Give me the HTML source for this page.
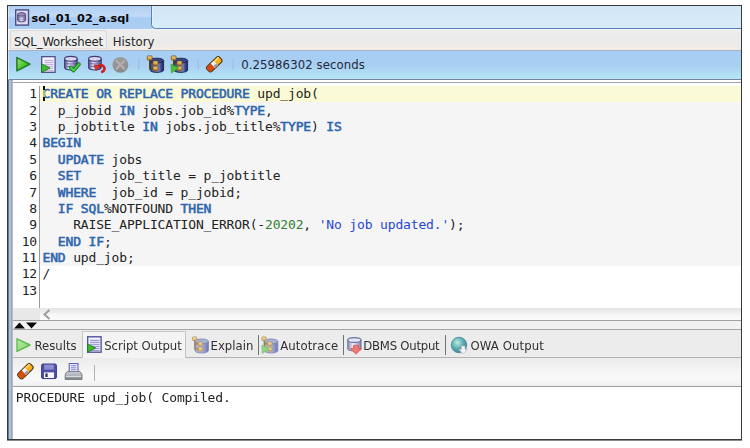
<!DOCTYPE html>
<html>
<head>
<meta charset="utf-8">
<title>SQL Worksheet</title>
<style>
html,body{margin:0;padding:0;background:#fff;}
body{width:750px;height:448px;overflow:hidden;position:relative;font-family:"DejaVu Sans","Liberation Sans",sans-serif;font-size:11.7px;color:#1a1a1a;}
.abs{position:absolute;}
#win{filter:blur(0.35px);position:absolute;left:7px;top:5px;width:733px;height:433px;border:1px solid #3a3a3a;box-shadow:0 1px 0 #8c8c8c;background:#fff;overflow:hidden;}
/* coordinates inside #win are offset by (8,6) */
#tabbar{left:0;top:0;width:733px;height:23px;background:linear-gradient(#d0e5f6,#d9edf8);}
#tabbar-line{left:143px;top:-3px;width:600px;height:25.7px;box-sizing:border-box;border:1.6px solid #5580b8;border-radius:0 0 0 4.5px;background:linear-gradient(#d2e6f6 12%,#d8ecf8 100%);box-shadow:inset 1px 0 0 #e6f2fb;}
#filetab{left:0;top:0;width:144px;height:23.4px;background:linear-gradient(#a4c8f0 0%,#b4d2f3 8%,#c2dbf6 44%,#a8ccf3 52%,#aacdf3 100%);border-top-right-radius:3px;box-sizing:border-box;}
#filetab .txt{left:23.6px;top:5.7px;font-weight:bold;font-size:11.3px;letter-spacing:0.02px;color:#0a0a0a;white-space:nowrap;}
#subtabs{left:0;top:24px;width:733px;height:20px;background:linear-gradient(#efeded,#ebebeb 55%,#f2ebe6);}
#ws-tab{left:1.5px;top:0px;width:97.5px;height:19.4px;background:#eeeeee;border:1px solid #d8d8d8;border-bottom-color:#e2e0de;border-radius:3px 3px 1px 1px;box-sizing:border-box;}
.t{position:absolute;white-space:nowrap;color:#262626;}
#toolbar{left:0;top:44px;width:733px;height:30px;background:linear-gradient(#a6cdf4 0%,#a9cff2 50%,#b6e6f4 100%);border-top:1px solid #a9b3c2;border-bottom:1px solid #7686a2;box-sizing:border-box;}
#tb-gap{left:0;top:74px;width:733px;height:6px;background:#fff;}
#tb-gap2{left:0;top:75.7px;width:733px;height:2px;background:linear-gradient(#9a9fa3,#b4b8bb);}
#leftedge{left:0;top:74px;width:5px;height:359px;background:linear-gradient(90deg,#66799a 0,#66799a 0.6px,#a8c3e6 0.9px,#a8c3e6 2.6px,#9da1a8 3px,#a6a8ac 4.2px,#d8d8d8 5px);}
#editor{left:4px;top:77px;width:729px;height:225px;background:#fff;font-family:"DejaVu Sans Mono","Liberation Mono",monospace;font-size:13px;}
.ln{position:absolute;left:28px;width:701px;height:16.4px;}
.ln .n{position:absolute;left:-28px;top:0.7px;width:25px;text-align:right;color:#222;line-height:16.33px;letter-spacing:-0.15px;}
.ln .c{position:absolute;left:2.5px;top:0.7px;white-space:pre;line-height:16.33px;letter-spacing:-0.155px;color:#222;}
.k{color:#2c64ae;-webkit-text-stroke:0.55px #2c64ae;}
.s{color:#2846d8;}
.num{color:#2f7f2f;}
#gutterline{left:27px;top:3px;width:1px;height:222px;background:#9a9a9a;}
#hscroll{left:4px;top:301.5px;width:729px;height:12.5px;background:linear-gradient(#e4e4e4 0,#ededed 30%,#f7f7f7 60%,#fbfbfb 100%);}
#hscroll .corner{left:0;top:0;width:28px;height:12.5px;background:#e8e8e8;}
#split1{left:0;top:313.8px;width:733px;height:1.6px;background:#a0a0a0;}
#splitter{left:0;top:315px;width:733px;height:8px;background:#f2f2f2;}
#split2{left:0;top:322.6px;width:733px;height:1.6px;background:#a6a6a6;}
#btabs .t{color:#303030;}
#btabs{left:4px;top:324px;width:729px;height:27.7px;background:#ececec;border-bottom:1px solid #b4b4b4;box-sizing:border-box;}
#so-tab{left:70px;top:1px;width:104px;height:28px;background:#f4f4f4;border:1px solid #c4c4c4;border-bottom:none;box-sizing:border-box;}
#btool{left:4px;top:352px;width:729px;height:29.4px;background:linear-gradient(#ececec 0,#f1f1f1 30%,#f8f8f8 62%,#f7f7f7 80%,#f0f0f0 100%);border-bottom:1.6px solid #9e9e9e;box-sizing:border-box;}
#out{left:4px;top:381.4px;width:729px;height:51.6px;background:#fff;font-family:"DejaVu Sans Mono","Liberation Mono",monospace;font-size:13px;}
.sep{position:absolute;width:1px;background:#8a8a8a;}
</style>
</head>
<body>
<div id="win">
  <div id="tabbar" class="abs"></div>
  
  <div class="abs" style="left:0;top:23px;width:733px;height:1px;background:#f1f3f6"></div>
  <div id="filetab" class="abs">
    <svg class="abs" style="left:7px;top:3px" width="15" height="18" viewBox="15 9 15 18">
      <defs><linearGradient id="gTabCyl" x1="0" y1="0" x2="1" y2="0"><stop offset="0" stop-color="#544c7c"/><stop offset="0.3" stop-color="#c8bee4"/><stop offset="0.5" stop-color="#ece6fa"/><stop offset="0.75" stop-color="#a89cd0"/><stop offset="1" stop-color="#544c7c"/></linearGradient></defs>
      <rect x="15.7" y="9.9" width="12.8" height="15.2" fill="#e0daf2" stroke="#484e88" stroke-width="1.4"/>
      <path d="M17.6 14.4 V20 A4 1.9 0 0 0 25.6 20 V14.4 Z" fill="url(#gTabCyl)" stroke="#4c4474" stroke-width="0.9"/>
      <ellipse cx="21.6" cy="14.4" rx="4" ry="1.8" fill="#9a8ebc" stroke="#4c4474" stroke-width="0.9"/>
      <path d="M18.2 16.8 A3.6 1.5 0 0 0 25 16.8 M18.2 18.8 A3.6 1.5 0 0 0 25 18.8" fill="none" stroke="#8278ac" stroke-width="0.6"/>
    </svg>
    <span class="t txt">sol_01_02_a.sql</span>
  </div>
  <div id="tabbar-line" class="abs"></div>
  <div id="subtabs" class="abs">
    <div id="ws-tab" class="abs"></div>
    <span class="t" style="left:6.1px;top:5px;letter-spacing:-0.17px">SQL_Worksheet</span>
    <span class="t" style="left:104.8px;top:5px;letter-spacing:0px">History</span>
  </div>
  <div id="toolbar" class="abs">
    <span class="t" style="left:233.2px;top:7px;letter-spacing:0.09px;color:#1e2a3c">0.25986302 seconds</span>
  </div>

  <svg class="abs" style="left:2px;top:46px" width="240" height="30" viewBox="10 52 240 30">
    <defs>
      <linearGradient id="gPlay" x1="0" y1="0" x2="1" y2="1"><stop offset="0" stop-color="#9be868"/><stop offset="0.6" stop-color="#46c032"/><stop offset="1" stop-color="#2aa31e"/></linearGradient>
      <linearGradient id="gCyl" x1="0" y1="0" x2="1" y2="0"><stop offset="0" stop-color="#4a4a88"/><stop offset="0.35" stop-color="#e4def2"/><stop offset="0.6" stop-color="#b9aed8"/><stop offset="1" stop-color="#3c3c74"/></linearGradient>
      <linearGradient id="gNavy" x1="0" y1="0" x2="1" y2="0"><stop offset="0" stop-color="#3a4678"/><stop offset="0.4" stop-color="#6a74ac"/><stop offset="0.65" stop-color="#7c80c4"/><stop offset="0.85" stop-color="#34427e"/><stop offset="1" stop-color="#1c2850"/></linearGradient>
      <linearGradient id="gNode" x1="0" y1="0" x2="0" y2="1"><stop offset="0" stop-color="#f0d68a"/><stop offset="1" stop-color="#c9872a"/></linearGradient>
      <linearGradient id="gGray" x1="0" y1="0" x2="0" y2="1"><stop offset="0" stop-color="#9c9c9c"/><stop offset="1" stop-color="#8a8a8a"/></linearGradient>
    </defs>
    <!-- run -->
    <path d="M16.9 57.6 L30 64.2 L16.9 70.9 Z" fill="url(#gPlay)" stroke="#1f7a1f" stroke-width="1.5" stroke-linejoin="round"/>
    <!-- run script -->
    <rect x="41.7" y="56.7" width="13.4" height="15.6" fill="#fbf8ff" stroke="#4a4e8a" stroke-width="1.3"/>
    <path d="M44.5 60.3H53.5M44.5 62.3H53.5M44.5 64.3H53.5M44.5 66.3H53.5M44.5 68.3H53.5M44.5 70.3H53.5" stroke="#b79cd4" stroke-width="1"/>
    <path d="M41.6 63.8 L50 68 L41.6 72.3 Z" fill="#43bb30" stroke="#1f7a1f" stroke-width="0.9" stroke-linejoin="round"/>
    <!-- commit -->
    <path d="M64.6 58.8 V67.6 A6.3 2.4 0 0 0 77.2 67.6 V58.8 Z" fill="url(#gCyl)" stroke="#3d3f78" stroke-width="1.1"/>
    <path d="M65 62.2 A6 2.2 0 0 0 76.8 62.2 M65 65 A6 2.2 0 0 0 76.8 65" fill="none" stroke="#6a66a0" stroke-width="0.8"/>
    <ellipse cx="70.9" cy="58.8" rx="6.3" ry="2.4" fill="#dcd6ee" stroke="#3d3f78" stroke-width="1.1"/>
    <path d="M70.6 67.4 L73.4 70.6 L79 64.2" fill="none" stroke="#17801b" stroke-width="3.6" stroke-linecap="round" stroke-linejoin="round"/>
    <path d="M70.6 67.4 L73.4 70.6 L79 64.2" fill="none" stroke="#4ed447" stroke-width="1.7" stroke-linecap="round" stroke-linejoin="round"/>
    <!-- rollback -->
    <path d="M88.6 58.8 V67.6 A6.3 2.4 0 0 0 101.2 67.6 V58.8 Z" fill="url(#gCyl)" stroke="#3d3f78" stroke-width="1.1"/>
    <path d="M89 62.2 A6 2.2 0 0 0 100.8 62.2 M89 65 A6 2.2 0 0 0 100.8 65" fill="none" stroke="#6a66a0" stroke-width="0.8"/>
    <ellipse cx="94.9" cy="58.8" rx="6.3" ry="2.4" fill="#dcd6ee" stroke="#3d3f78" stroke-width="1.1"/>
    <path d="M98 67.2 A3.4 3.4 0 1 1 102.2 71.8" fill="none" stroke="#d21e1e" stroke-width="2.6" stroke-linecap="round"/>
    <path d="M94.2 65.2 L99.6 65.6 L96.2 70.6 Z" fill="#e23a22" stroke="#c01818" stroke-width="0.8" stroke-linejoin="round"/>
    <!-- cancel -->
    <circle cx="120.4" cy="64.8" r="7.9" fill="url(#gGray)"/>
    <path d="M116.6 61 L124.2 68.6 M124.2 61 L116.6 68.6" stroke="#b4aeae" stroke-width="2.2" stroke-linecap="round"/>
    <!-- separators -->
    <rect x="138.3" y="59" width="1" height="11" fill="#9fb9d6"/>
    <rect x="197.6" y="59" width="1" height="11" fill="#9fb9d6"/>
    <rect x="232.6" y="59" width="1" height="11" fill="#9fb9d6"/>
    <!-- explain -->
    <path d="M150 60.6 V70 A6.8 2.4 0 0 0 163.6 70 V60.6 Z" fill="url(#gNavy)" stroke="#22305c" stroke-width="1"/>
    <ellipse cx="156.8" cy="60.6" rx="6.8" ry="2.4" fill="#34448a" stroke="#1c2850" stroke-width="1"/>
    <path d="M149.6 58 V68.2 H154 M149.6 63 H154" fill="none" stroke="#5a3c14" stroke-width="1.1"/>
    <rect x="147.2" y="55.9" width="5" height="4.2" rx="1" fill="url(#gNode)" stroke="#7a5418" stroke-width="0.8"/>
    <rect x="153" y="61" width="5" height="4.2" rx="1" fill="url(#gNode)" stroke="#7a5418" stroke-width="0.8"/>
    <rect x="153" y="66.2" width="5" height="4.2" rx="1" fill="url(#gNode)" stroke="#7a5418" stroke-width="0.8"/>
    <!-- autotrace -->
    <path d="M174 60.6 V70 A6.8 2.4 0 0 0 187.6 70 V60.6 Z" fill="url(#gNavy)" stroke="#22305c" stroke-width="1"/>
    <ellipse cx="180.8" cy="60.6" rx="6.8" ry="2.4" fill="#34448a" stroke="#1c2850" stroke-width="1"/>
    <path d="M173.6 58 V68.2 H178 M173.6 63 H178" fill="none" stroke="#5a3c14" stroke-width="1.1"/>
    <rect x="171.2" y="55.9" width="5" height="4.2" rx="1" fill="url(#gNode)" stroke="#7a5418" stroke-width="0.8"/>
    <rect x="177" y="61" width="5" height="4.2" rx="1" fill="url(#gNode)" stroke="#7a5418" stroke-width="0.8"/>
    <rect x="177" y="66.2" width="5" height="4.2" rx="1" fill="url(#gNode)" stroke="#7a5418" stroke-width="0.8"/>
    <path d="M171 64 L178.6 68 L171.4 73 Z" fill="#4cc03a" stroke="#2a9a24" stroke-width="0.6" stroke-linejoin="round"/>
    <!-- eraser -->
    <g transform="rotate(-44 214.3 64.3)">
      <rect x="205.6" y="60.8" width="17.4" height="7" rx="2.4" fill="#f6ae1c" stroke="#4a2a0c" stroke-width="1"/>
      <rect x="206.1" y="61.3" width="6.8" height="6" rx="2" fill="#d8460c"/>
      <rect x="212.2" y="61.3" width="4.2" height="6" fill="#f4f2f0"/>
      <rect x="212.2" y="64.9" width="4.2" height="2.4" fill="#9a9ea8"/>
      <rect x="216.6" y="61.4" width="5.6" height="1.8" fill="#fcd460"/>
    </g>
  </svg>
  <div id="tb-gap" class="abs"></div>
  <div id="tb-gap2" class="abs"></div>
  <div id="editor" class="abs">
    <div class="ln" style="top:2.70px;background:#fbfad7"><span class="n">1</span><span class="c"><span class="k">CREATE OR REPLACE PROCEDURE</span> upd_job(</span></div>
    <div class="ln" style="top:19.07px;background:#f5f5f5"><span class="n">2</span><span class="c">  p_jobid <span class="k">IN</span> jobs.job_id%<span class="k">TYPE</span>,</span></div>
    <div class="ln" style="top:35.44px;background:#f5f5f5"><span class="n">3</span><span class="c">  p_jobtitle <span class="k">IN</span> jobs.job_title%<span class="k">TYPE</span>) <span class="k">IS</span></span></div>
    <div class="ln" style="top:51.81px;background:#f5f5f5"><span class="n">4</span><span class="c"><span class="k">BEGIN</span></span></div>
    <div class="ln" style="top:68.18px;background:#f5f5f5"><span class="n">5</span><span class="c">  <span class="k">UPDATE</span> jobs</span></div>
    <div class="ln" style="top:84.55px;background:#f5f5f5"><span class="n">6</span><span class="c">  <span class="k">SET</span>    job_title = p_jobtitle</span></div>
    <div class="ln" style="top:100.92px;background:#f5f5f5"><span class="n">7</span><span class="c">  <span class="k">WHERE</span>  job_id = p_jobid;</span></div>
    <div class="ln" style="top:117.29px;background:#f5f5f5"><span class="n">8</span><span class="c">  <span class="k">IF SQL</span>%NOTFOUND <span class="k">THEN</span></span></div>
    <div class="ln" style="top:133.66px;background:#f5f5f5"><span class="n">9</span><span class="c">    RAISE_APPLICATION_ERROR(-<span class="num">20202</span>, <span class="s">'No job updated.'</span>);</span></div>
    <div class="ln" style="top:150.03px;background:#f5f5f5"><span class="n">10</span><span class="c">  <span class="k">END IF</span>;</span></div>
    <div class="ln" style="top:166.40px;background:#f5f5f5"><span class="n">11</span><span class="c"><span class="k">END</span> upd_job;</span></div>
    <div class="ln" style="top:182.77px"><span class="n">12</span><span class="c">/</span></div>
    <div class="ln" style="top:199.14px"><span class="n">13</span><span class="c"></span></div>
    <div id="gutterline" class="abs"></div>
    <div class="abs" style="left:31.2px;top:2.8px;width:2.1px;height:15.6px;background:linear-gradient(#0a0a0a 0,#0a0a0a 26%,#bfae5a 30%,#c8b862 70%,#0a0a0a 75%,#0a0a0a 100%)"></div>
  </div>
  <div id="hscroll" class="abs"><div class="corner abs"></div>
    <svg class="abs" style="left:31px;top:1px" width="8" height="11" viewBox="0 0 8 11"><path d="M6.5 1 L1.5 5.5 L6.5 10" fill="none" stroke="#9c9c9c" stroke-width="2"/></svg>
  </div>
  <div id="split1" class="abs"></div>
  <div id="splitter" class="abs">
    <svg class="abs" style="left:6px;top:1px" width="26" height="7" viewBox="0 0 26 7"><path d="M0 6.5 L5.5 0.5 L11 6.5 Z M12 0.5 L23 0.5 L17.5 6.5 Z" fill="#0a0a0a"/></svg>
  </div>
  <div id="split2" class="abs"></div>
  <div id="btabs" class="abs">
    <div id="so-tab" class="abs"></div>
    <span class="t" style="left:22.5px;top:8.5px;letter-spacing:0px">Results</span>
    <span class="t" style="left:92.2px;top:8.5px;letter-spacing:-0.05px">Script Output</span>
    <span class="t" style="left:198.5px;top:8.5px;letter-spacing:0px">Explain</span>
    <span class="t" style="left:268.2px;top:8.5px;letter-spacing:0.09px">Autotrace</span>
    <span class="t" style="left:351.3px;top:8.5px;letter-spacing:-0.25px">DBMS Output</span>
    <span class="t" style="left:458.4px;top:8.5px;letter-spacing:0.12px">OWA Output</span>
    <div class="sep" style="left:245.6px;top:4.5px;height:20.5px;width:1.4px;background:#727272"></div>
    <div class="sep" style="left:330.7px;top:4.5px;height:20.5px;width:1.4px;background:#727272"></div>
    <div class="sep" style="left:432.5px;top:4.5px;height:20.5px;width:1.4px;background:#727272"></div>
  </div>
  <div id="btool" class="abs">
    <div class="sep" style="left:81.5px;top:6.5px;height:16px;background:#b4b4b4"></div>
  </div>

  <svg class="abs" style="left:2px;top:324px" width="560" height="58" viewBox="10 330 560 58">
    <defs>
      <linearGradient id="gPlayL" x1="0" y1="0" x2="1" y2="1"><stop offset="0" stop-color="#b8eca4"/><stop offset="1" stop-color="#80d26c"/></linearGradient>
      <linearGradient id="gNavyL" x1="0" y1="0" x2="1" y2="0"><stop offset="0" stop-color="#b4b0b4"/><stop offset="0.45" stop-color="#b6b8d8"/><stop offset="0.75" stop-color="#8c96c8"/><stop offset="1" stop-color="#6a78b0"/></linearGradient>
      <linearGradient id="gNodeL" x1="0" y1="0" x2="0" y2="1"><stop offset="0" stop-color="#f4e4b0"/><stop offset="1" stop-color="#dcae68"/></linearGradient>
      <linearGradient id="gCylL" x1="0" y1="0" x2="1" y2="0"><stop offset="0" stop-color="#8c8cb8"/><stop offset="0.4" stop-color="#f0ecf8"/><stop offset="1" stop-color="#8484b0"/></linearGradient>
      <radialGradient id="gGlobe" cx="0.4" cy="0.35" r="0.7"><stop offset="0" stop-color="#bfeee0"/><stop offset="0.5" stop-color="#5fb0b4"/><stop offset="1" stop-color="#3c7c98"/></radialGradient>
      <linearGradient id="gPrn" x1="0" y1="0" x2="0" y2="1"><stop offset="0" stop-color="#d0d4d8"/><stop offset="0.6" stop-color="#a4aab0"/><stop offset="1" stop-color="#7a8088"/></linearGradient>
    </defs>
    <!-- results (disabled play) -->
    <path d="M17 338.8 L30 345 L17 351.4 Z" fill="url(#gPlayL)" stroke="#5ebc52" stroke-width="1.4" stroke-linejoin="round"/>
    <!-- script output -->
    <rect x="87.7" y="336.8" width="13.4" height="15.4" fill="#f6f4ff" stroke="#4e56a0" stroke-width="1.4"/>
    <path d="M90 340.3H99.6M90 342.3H99.6M90 344.3H99.6M90 346.3H99.6M90 348.3H99.6M90 350.3H99.6" stroke="#8c88cc" stroke-width="1"/>
    <path d="M87.6 344 L95.6 348 L87.6 352.2 Z" fill="#3fba2e" stroke="#1f7a1f" stroke-width="0.9" stroke-linejoin="round"/>
    <!-- explain (light) -->
    <path d="M195 341.4 V350.6 A6.7 2.4 0 0 0 208.4 350.6 V341.4 Z" fill="url(#gNavyL)" stroke="#7c88b8" stroke-width="0.9"/>
    <ellipse cx="201.7" cy="341.4" rx="6.7" ry="2.4" fill="#a8b0d4" stroke="#7c88b8" stroke-width="0.9"/>
    <path d="M194.8 339 V349 H199 M194.8 344 H199" fill="none" stroke="#9a7c4c" stroke-width="1.1"/>
    <rect x="192.4" y="336.9" width="4.4" height="3.7" rx="1" fill="url(#gNodeL)" stroke="#b49458" stroke-width="0.8"/>
    <rect x="198.2" y="342" width="4.4" height="3.7" rx="1" fill="url(#gNodeL)" stroke="#b49458" stroke-width="0.8"/>
    <rect x="198.2" y="347.2" width="4.4" height="3.7" rx="1" fill="url(#gNodeL)" stroke="#b49458" stroke-width="0.8"/>
    <!-- autotrace (light) -->
    <path d="M264.4 341.4 V350.6 A6.7 2.4 0 0 0 277.8 350.6 V341.4 Z" fill="url(#gNavyL)" stroke="#7c88b8" stroke-width="0.9"/>
    <ellipse cx="271.1" cy="341.4" rx="6.7" ry="2.4" fill="#a8b0d4" stroke="#7c88b8" stroke-width="0.9"/>
    <path d="M264.2 339 V349 H268.4 M264.2 344 H268.4" fill="none" stroke="#9a7c4c" stroke-width="1.1"/>
    <rect x="261.8" y="336.9" width="4.4" height="3.7" rx="1" fill="url(#gNodeL)" stroke="#b49458" stroke-width="0.8"/>
    <rect x="267.6" y="342" width="4.4" height="3.7" rx="1" fill="url(#gNodeL)" stroke="#b49458" stroke-width="0.8"/>
    <rect x="267.6" y="347.2" width="4.4" height="3.7" rx="1" fill="url(#gNodeL)" stroke="#b49458" stroke-width="0.8"/>
    <path d="M261.8 345 L269 349 L262.2 353.6 Z" fill="#8cd880" stroke="#6cc060" stroke-width="0.6" stroke-linejoin="round"/>
    <!-- dbms output -->
    <path d="M347.8 340 V348.6 A6.6 2.4 0 0 0 361 348.6 V340 Z" fill="url(#gCylL)" stroke="#6c74a4" stroke-width="1.1"/>
    <ellipse cx="354.4" cy="340" rx="6.6" ry="2.4" fill="#e6e6f4" stroke="#6c74a4" stroke-width="1.1"/>
    <path d="M353.6 345.4 H358.4 V348.6 H361.6 L356 354.2 L350.4 348.6 H353.6 Z" fill="#ec7a70" stroke="#d85850" stroke-width="0.8" stroke-linejoin="round"/>
    <!-- owa output -->
    <circle cx="459" cy="345" r="7.8" fill="url(#gGlobe)" stroke="#4a8aa0" stroke-width="0.8"/>
    <path d="M461.4 346 H465 V349.4 H467.6 L463.2 354 L458.8 349.4 H461.4 Z" fill="#f4f4f4" stroke="#b8b8b8" stroke-width="0.7" stroke-linejoin="round"/>
    <!-- eraser -->
    <g transform="rotate(-44 25.4 371.2)">
      <rect x="16.7" y="367.7" width="17.4" height="7" rx="2.4" fill="#f6ae1c" stroke="#4a2a0c" stroke-width="1"/>
      <rect x="17.2" y="368.2" width="6.8" height="6" rx="2" fill="#d84e0c"/>
      <rect x="23.3" y="368.2" width="4.2" height="6" fill="#f4f2f0"/>
      <rect x="23.3" y="371.8" width="4.2" height="2.4" fill="#9a9ea8"/>
      <rect x="27.7" y="368.3" width="5.6" height="1.8" fill="#fcd460"/>
    </g>
    <!-- save -->
    <rect x="41.6" y="364" width="14.8" height="14.6" rx="1.4" fill="#5050a8" stroke="#3a3a88" stroke-width="1"/>
    <rect x="44.2" y="364.6" width="9.6" height="5" fill="#8c8cd0"/>
    <rect x="44" y="372.4" width="10" height="5.6" fill="#f8f8fc"/>
    <rect x="45.4" y="373.4" width="2.2" height="3.6" fill="#2c2c60"/>
    <!-- print -->
    <rect x="69.2" y="363.6" width="8.8" height="9" fill="#f0f2ff" stroke="#5058a4" stroke-width="1"/>
    <path d="M70.8 365.8H76.4M70.8 367.8H76.4M70.8 369.8H76.4" stroke="#6c78c8" stroke-width="0.9"/>
    <path d="M67.2 371.6 H80 L82 374.4 V379.4 H65.2 V374.4 Z" fill="url(#gPrn)" stroke="#70767c" stroke-width="0.9" stroke-linejoin="round"/>
    <path d="M66 376.4 H81.2" stroke="#e8eaec" stroke-width="0.9"/>
  </svg>
  <div id="out" class="abs"><span class="t" style="left:3.8px;top:2.9px;letter-spacing:-0.155px;color:#222;line-height:16px">PROCEDURE upd_job( Compiled.</span></div>
  <div id="leftedge" class="abs"></div>
  <div class="abs" style="left:0;top:0;width:1.2px;height:74px;background:rgba(240,248,255,0.5)"></div>
</div>
</body>
</html>
